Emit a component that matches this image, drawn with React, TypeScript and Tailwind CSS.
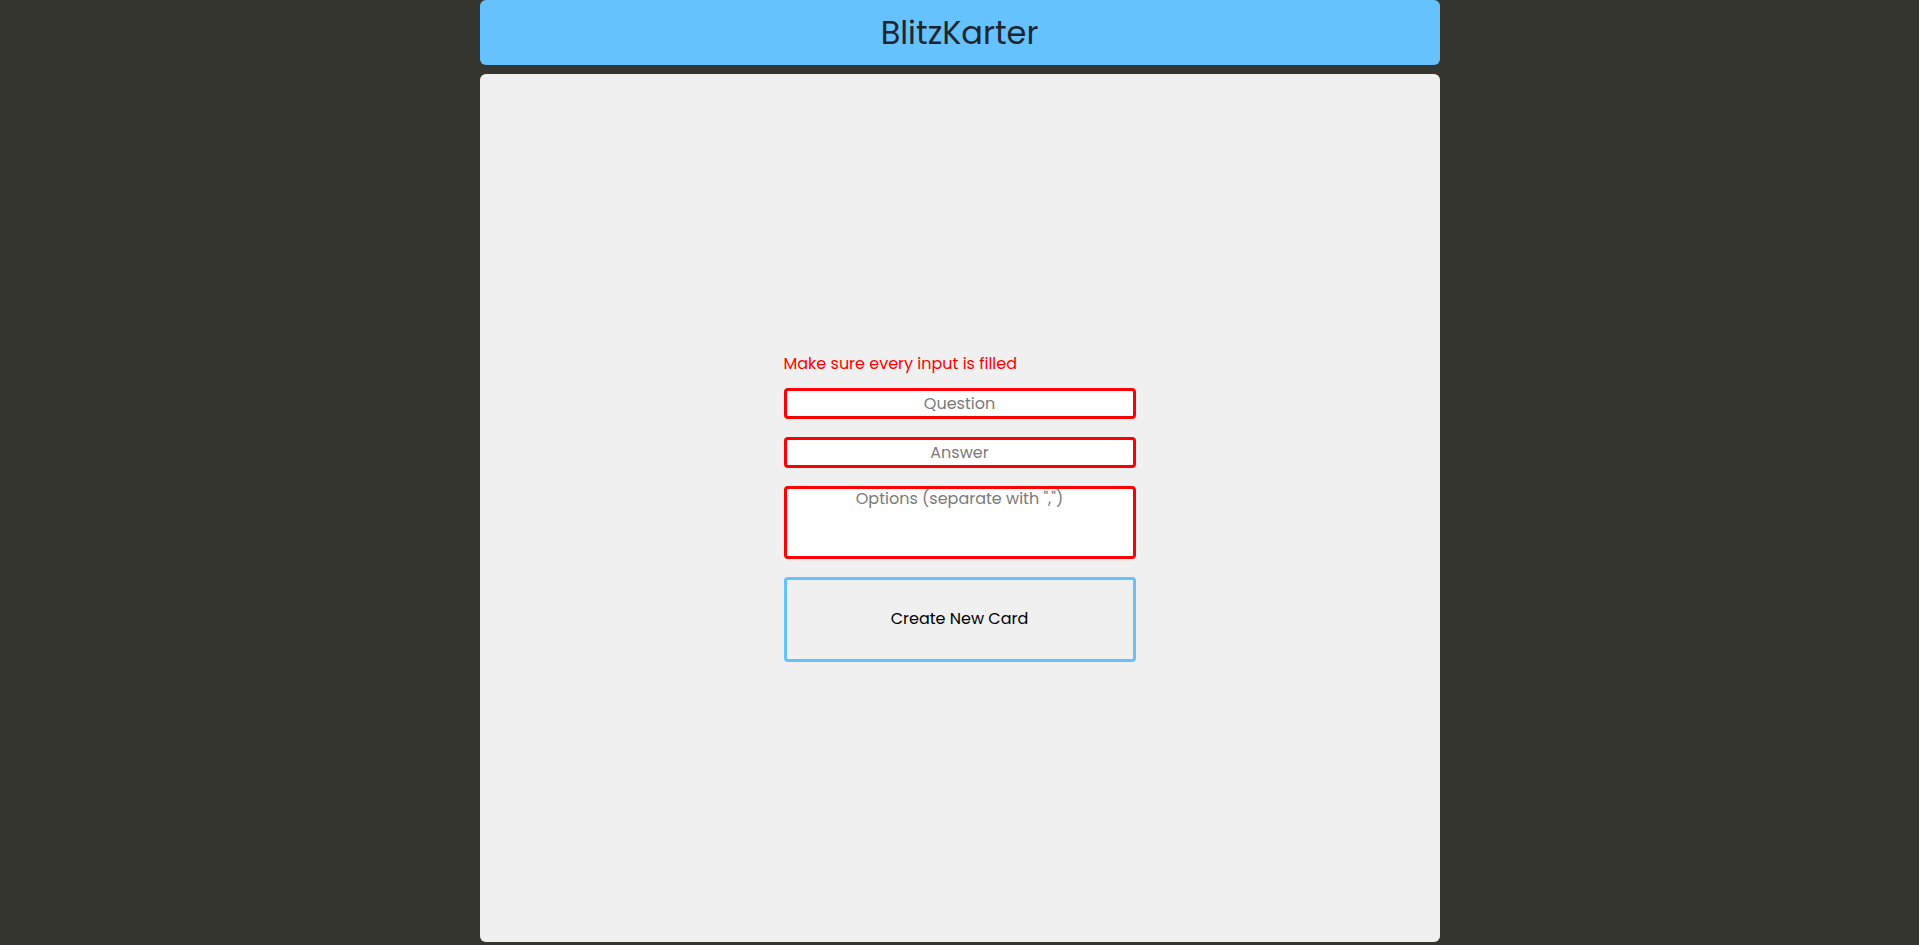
import { useState } from 'react'

export default function App() {
  const [question, setQuestion] = useState('')
  const [answer, setAnswer] = useState('')
  const [options, setOptions] = useState('')

  return (
    <div
      className="min-h-screen bg-[#363631] text-[#1f1f1f]"
      style={{ fontFamily: '"Poppins", "Open Sans", sans-serif' }}
    >
      <div className="mx-auto flex w-[960px] flex-col gap-[9px]">
        <header className="flex h-[65px] items-center justify-center rounded-[6px] bg-[#66c2ff]">
          <h1 className="text-[32px] font-normal leading-none text-[#1c2530]">
            BlitzKarter
          </h1>
        </header>
        <main className="flex h-[868px] items-center justify-center rounded-[6px] bg-[#f0f0f0]">
          <form
            className="flex w-[352px] flex-col"
            onSubmit={(e) => e.preventDefault()}
          >
            <p className="mb-[15px] text-[16px] leading-[18px] text-[#ff0000]">
              Make sure every input is filled
            </p>
            <input
              value={question}
              onChange={(e) => setQuestion(e.target.value)}
              placeholder="Question"
              className="h-[31px] rounded-[4px] border-[3px] border-[#ff0000] bg-white text-center text-[16px] text-black outline-none placeholder:text-[#7a7a7a]"
            />
            <input
              value={answer}
              onChange={(e) => setAnswer(e.target.value)}
              placeholder="Answer"
              className="mt-[18px] h-[31px] rounded-[4px] border-[3px] border-[#ff0000] bg-white text-center text-[16px] text-black outline-none placeholder:text-[#7a7a7a]"
            />
            <textarea
              value={options}
              onChange={(e) => setOptions(e.target.value)}
              placeholder='Options (separate with ",")'
              className="mt-[18px] h-[73px] resize-none rounded-[4px] border-[3px] border-[#ff0000] bg-white text-center text-[16px] leading-[20px] text-black outline-none placeholder:text-[#7a7a7a]"
            />
            <button
              type="submit"
              className="mt-[18px] h-[85px] rounded-[4px] border-[3px] border-[#66c2ff] bg-[#f0f0f0] text-[16px] text-black"
            >
              Create New Card
            </button>
          </form>
        </main>
      </div>
    </div>
  )
}
